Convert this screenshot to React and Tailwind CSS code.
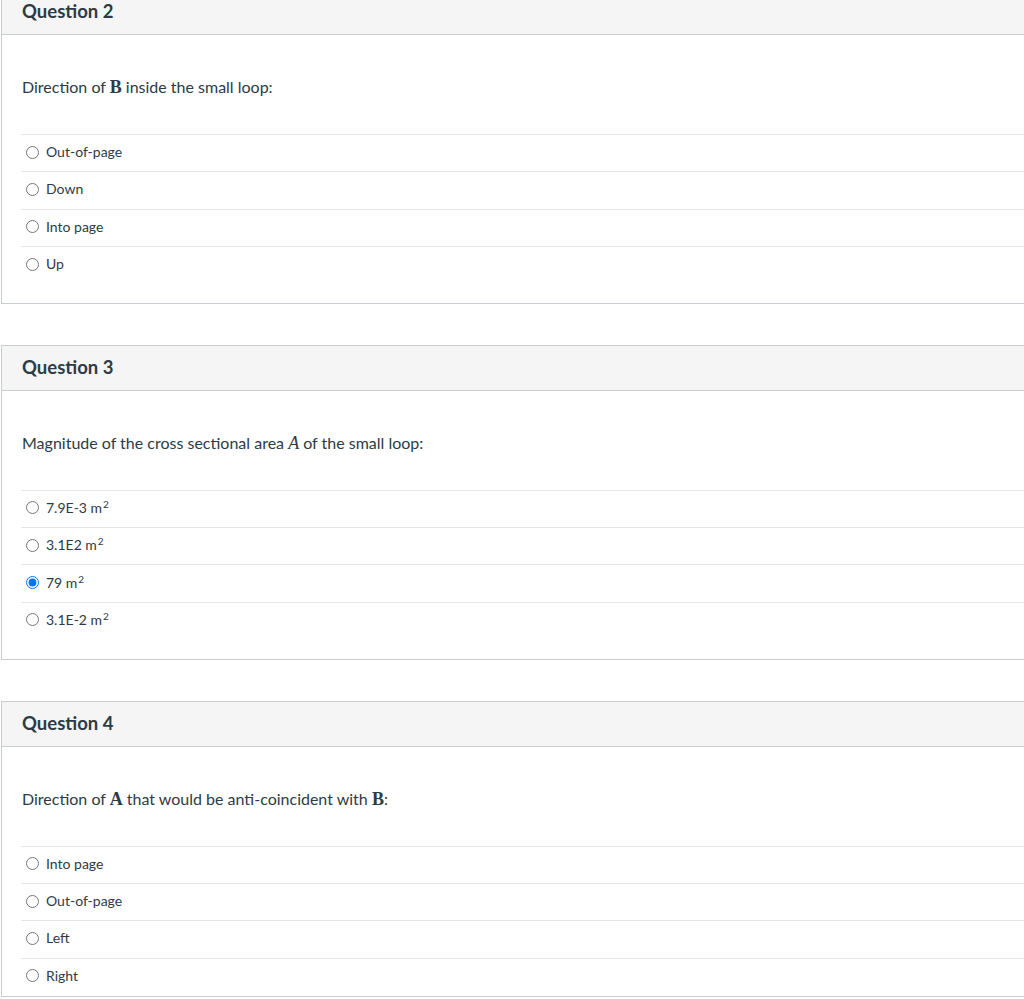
import { useState } from "react"

const questions = [
  {
    title: "Question 2",
    prompt: (
      <>
        Direction of <MathBold>B</MathBold> inside the small loop:
      </>
    ),
    answers: ["Out-of-page", "Down", "Into page", "Up"],
    selected: null,
  },
  {
    title: "Question 3",
    prompt: (
      <>
        Magnitude of the cross sectional area <MathItalic>A</MathItalic> of the small loop:
      </>
    ),
    answers: [
      <>7.9E-3 m<Sup>2</Sup></>,
      <>3.1E2 m<Sup>2</Sup></>,
      <>79 m<Sup>2</Sup></>,
      <>3.1E-2 m<Sup>2</Sup></>,
    ],
    selected: 2,
  },
  {
    title: "Question 4",
    prompt: (
      <>
        Direction of <MathBold>A</MathBold> that would be anti-coincident with <MathBold>B</MathBold>:
      </>
    ),
    answers: ["Into page", "Out-of-page", "Left", "Right"],
    selected: null,
    last: true,
  },
]

function MathBold({ children }) {
  return <span className="font-bold text-[18px] font-['Liberation_Serif',serif]">{children}</span>
}

function MathItalic({ children }) {
  return <span className="italic text-[18px] font-['Liberation_Serif',serif]">{children}</span>
}

function Sup({ children }) {
  return <sup className="text-[10px] ml-px">{children}</sup>
}

function QuestionCard({ q, idx }) {
  const [value, setValue] = useState(q.selected)
  return (
    <div className="border-l border-t border-b border-[#c7cdd1] bg-white">
      <div className="h-[45px] flex items-center px-5 bg-[#f5f5f5] border-b border-[#c7cdd1]">
        <h2 className="text-[18.5px] font-bold text-[#2d3b45]">{q.title}</h2>
      </div>
      <div className={q.last ? "pt-10 pb-px" : "pt-10 pb-5"}>
        <p className="px-5 text-[16px] leading-6 text-[#2d3b45]">{q.prompt}</p>
        <div className="mt-[35px] ml-[19px]">
          {q.answers.map((a, i) => (
            <label
              key={i}
              className="h-[37.33px] flex items-center border-t border-[#e3e6e8] pl-[5px] pb-[2px] text-[14px] text-[#2d3b45]"
            >
              <input
                type="radio"
                name={"q" + idx}
                checked={value === i}
                onChange={() => setValue(i)}
                className="m-0 w-[13px] h-[13px]"
              />
              <span className="ml-[7px] -mt-px">{a}</span>
            </label>
          ))}
        </div>
      </div>
    </div>
  )
}

export default function App() {
  return (
    <div className="min-h-screen bg-white overflow-hidden font-['Lato','Noto_Sans',sans-serif]">
      <div className="-mt-[11px] pl-px flex flex-col gap-[40.5px]">
        {questions.map((q, i) => (
          <QuestionCard key={i} q={q} idx={i} />
        ))}
      </div>
    </div>
  )
}
